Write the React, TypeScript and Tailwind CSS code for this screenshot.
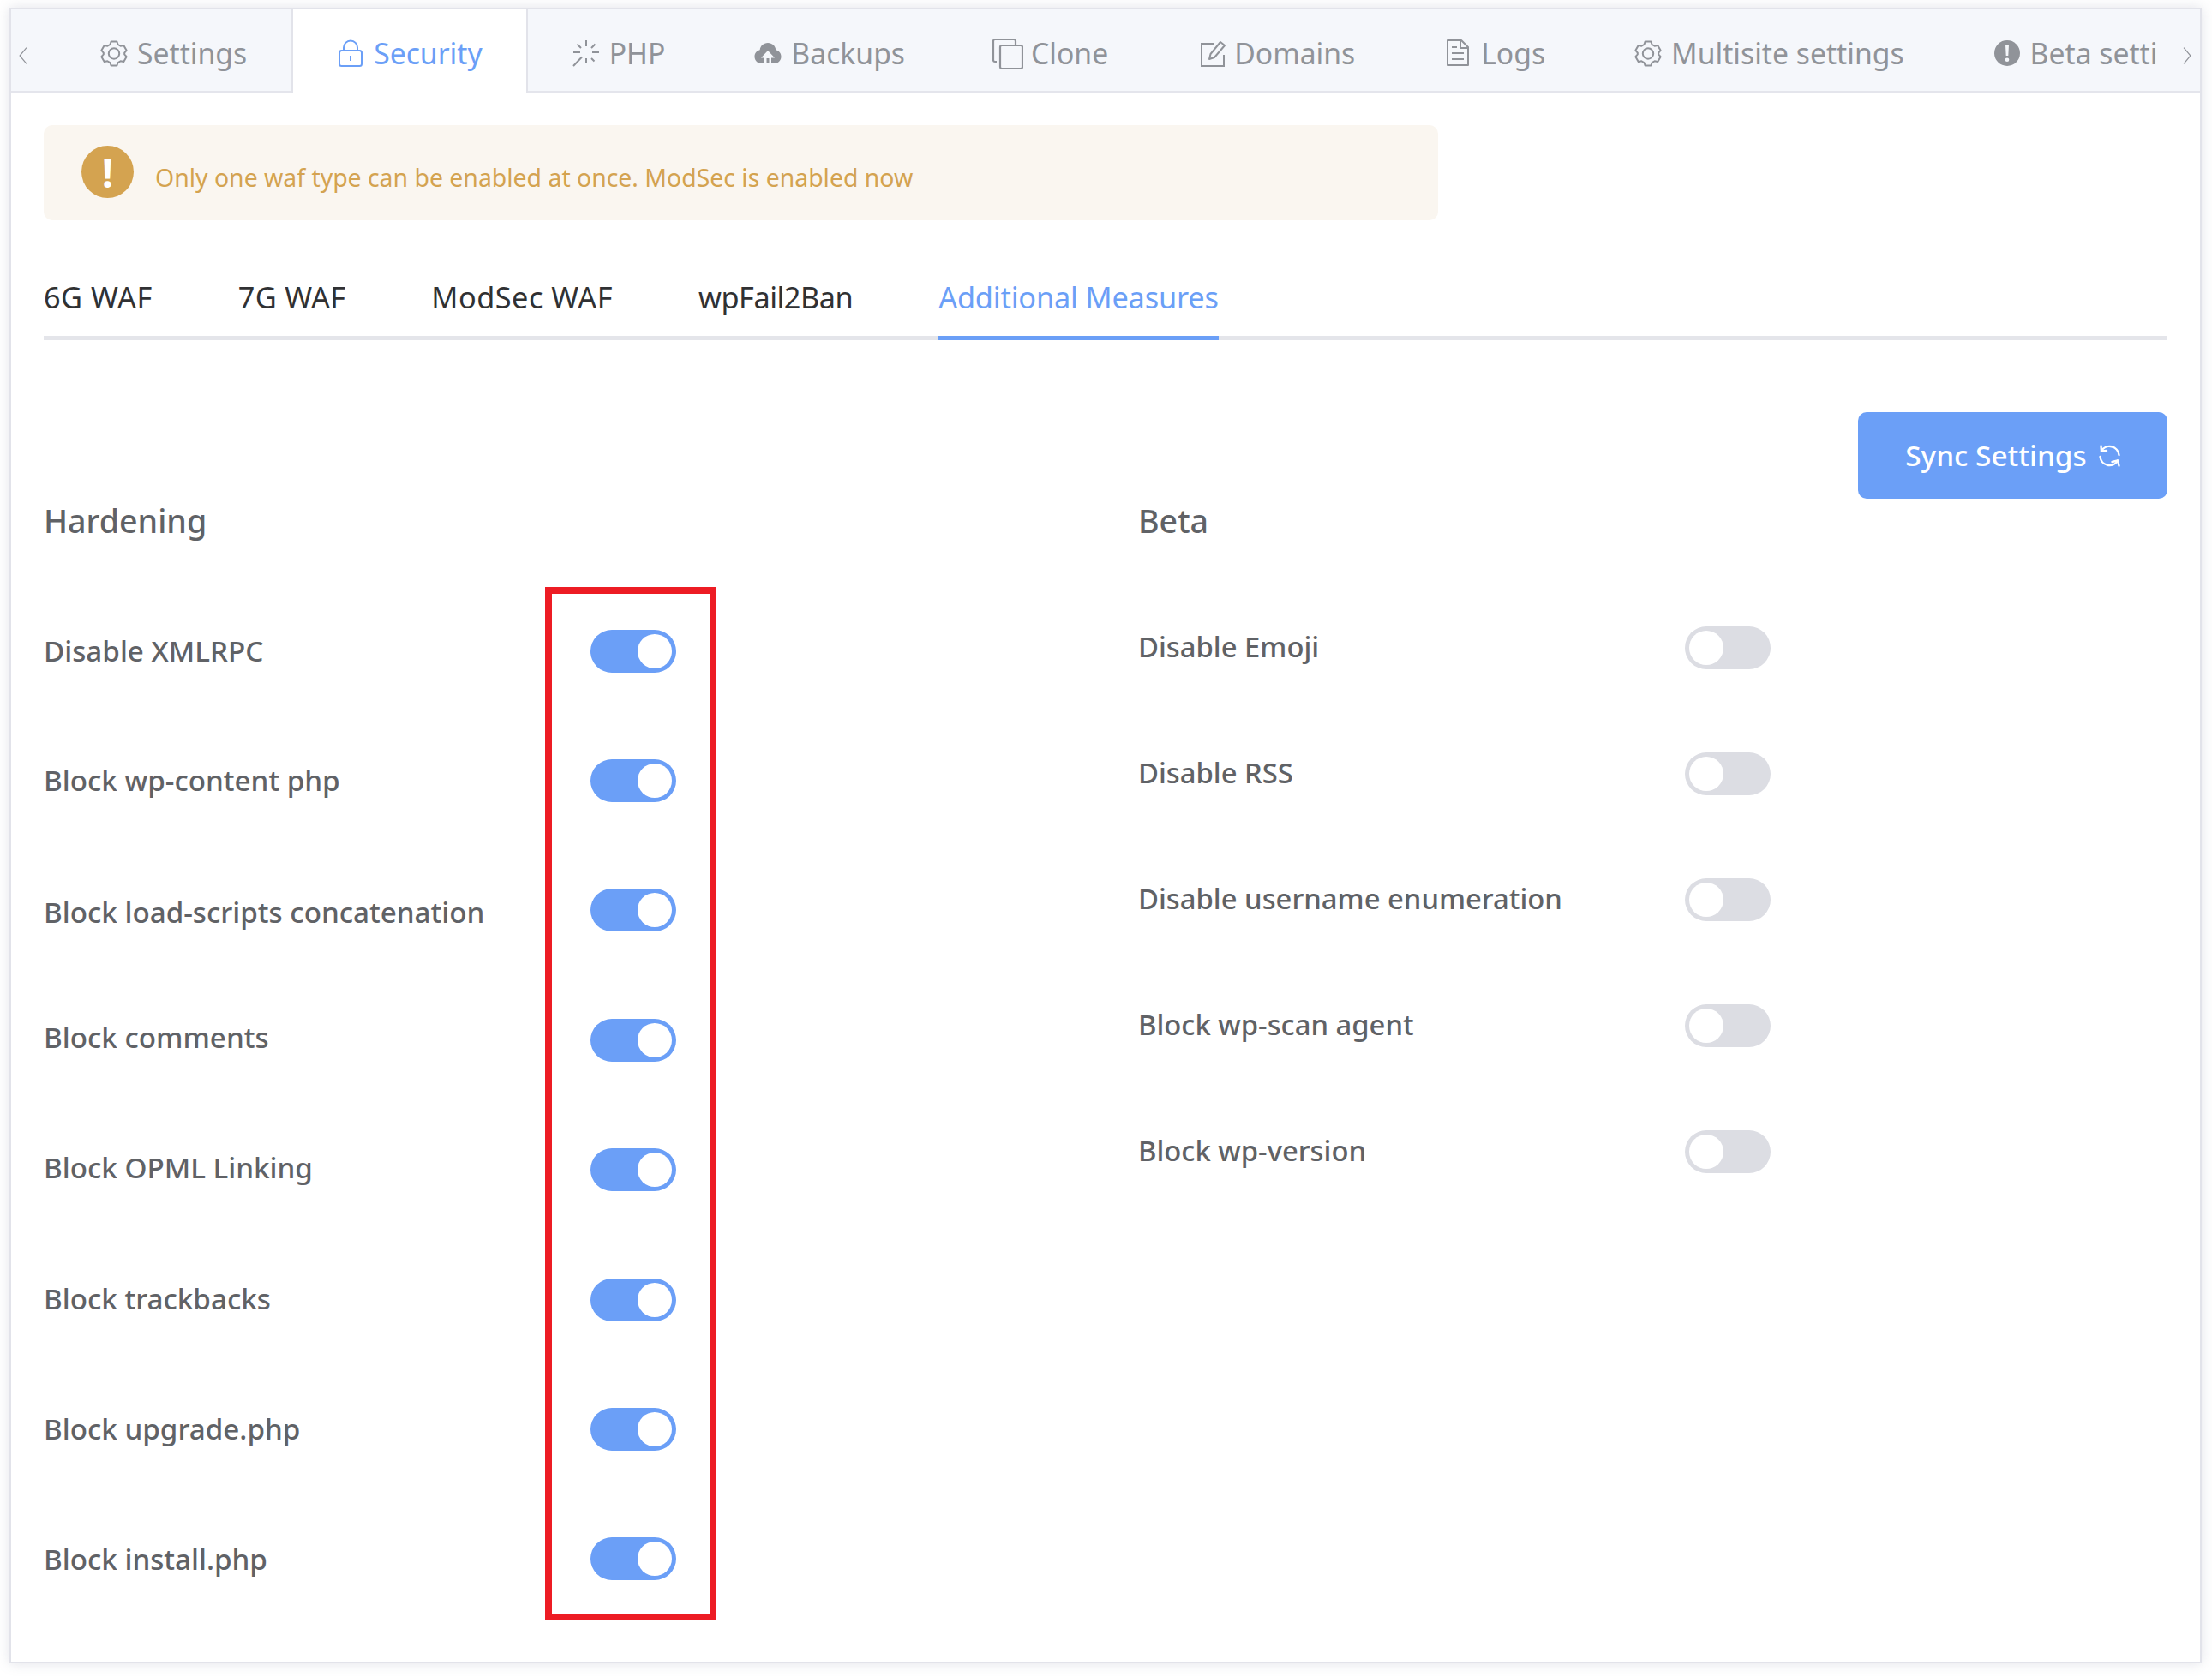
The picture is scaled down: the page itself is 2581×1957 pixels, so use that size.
import React from "react";

const Gear = ({ c = "" }: { c?: string }) => (
  <svg viewBox="0 0 32 32" className={"w-[32px] h-[32px] -mt-[2px] " + c} fill="none" stroke="currentColor" strokeWidth="2" strokeLinejoin="round">
    <path d="M12.6 2.5 19.4 2.5 20.6 6 23.6 7.7 27.3 7 30.6 12.8 28.2 15.6 28.2 17.4 30.6 20.2 27.3 26 23.6 25.3 20.6 27 19.4 30.5 12.6 30.5 11.4 27 8.4 25.3 4.7 26 1.4 20.2 3.8 17.4 3.8 15.6 1.4 12.8 4.7 7 8.4 7.7 11.4 6Z" />
    <circle cx="16" cy="16.5" r="6.2" />
  </svg>
);
const Lock = () => (
  <svg viewBox="0 0 32 32" className="w-[32px] h-[32px] -mt-[2px]" fill="none" stroke="currentColor" strokeWidth="2">
    <rect x="3" y="13" width="26" height="18" rx="2.5" />
    <path d="M8 13V9.5a8 8 0 0 1 16 0V13" />
    <path d="M16 19v6" />
  </svg>
);
const Spin = () => (
  <svg viewBox="0 0 32 32" className="w-[32px] h-[32px] -mt-[2px]" fill="none" stroke="currentColor" strokeWidth="2">
    <path d="M16 1v7M16 22v6M26.5 5.5l-4.5 4.5M22 22l3.5 3.5M31 15h-8M9 15H1M5.5 5.5 10 10M11 20.500 1 31" />
  </svg>
);
const Cloud = () => (
  <svg viewBox="0 0 32 32" className="w-[32px] h-[32px]" fill="currentColor">
    <path fillRule="evenodd" d="M16 3c5 0 8.800 3.600 9.300 8.200C29 12 31.500 15 31.500 19c0 4.700-3.500 8-7.800 8H20v-6.500h4L16 12l-8 8.500h4V27H8.300C4 27 .5 23.700.5 19c0-4 2.500-7 6.200-7.800C7.200 6.600 11 3 16 3Z" />
    <path d="M14.500 21h3v6h-3z" />
  </svg>
);
const Copy = () => (
  <svg viewBox="0 0 36 36" className="w-[36px] h-[36px] -ml-[2px] -mr-[2px] shrink-0" fill="none" stroke="currentColor" strokeWidth="2.200">
    <path d="M5 27H3a2 2 0 0 1-2-2V3a2 2 0 0 1 2-2h22a2 2 0 0 1 2 2v4" />
    <rect x="9" y="8" width="26" height="27" rx="2" />
  </svg>
);
const Edit = () => (
  <svg viewBox="0 0 32 32" className="w-[32px] h-[32px] translate-x-[2px]" fill="none" stroke="currentColor" strokeWidth="2">
    <path d="M17 4H3v26h26V17" />
    <path d="M12 22l1.500-6L25 2l5 4-12 14Z" strokeLinejoin="round" />
  </svg>
);
const Doc = () => (
  <svg viewBox="0 0 32 32" className="w-[32px] h-[32px] -mt-[1px]" fill="none" stroke="currentColor" strokeWidth="2">
    <path d="M4 1h16l8 8v21H4ZM19 1v9h9" strokeLinejoin="round" />
    <path d="M9 9h6M9 16h14M9 23h14" />
  </svg>
);
const Warn = () => (
  <svg viewBox="0 0 32 32" className="w-[32px] h-[32px] -mt-[2px]" fill="currentColor">
    <circle cx="16" cy="16" r="15" />
    <path d="M14 6h4l-.7 13h-2.600z M16 21.500a2.300 2.300 0 1 1 0 4.600 2.300 2.300 0 0 1 0-4.600z" fill="#f5f7fb" />
  </svg>
);
const Refresh = () => (
  <svg viewBox="0 0 25 26" className="w-[25px] h-[26px]" fill="none" stroke="currentColor" strokeWidth="2.400" strokeLinecap="round" strokeLinejoin="round">
    <path d="M3 7.500A11 11 0 0 1 23.500 12" />
    <path d="M1.500 14A11 11 0 0 0 22 18.500" />
    <path d="M2.500 1.500 3 7.500 9 7M15.500 20 22 18.500 23.500 24.500" />
  </svg>
);

const tabs: { label: string; icon: React.ReactNode; active?: boolean }[] = [
  { label: "Settings", icon: <Gear /> },
  { label: "Security", icon: <Lock />, active: true },
  { label: "PHP", icon: <Spin /> },
  { label: "Backups", icon: <Cloud /> },
  { label: "Clone", icon: <Copy /> },
  { label: "Domains", icon: <Edit /> },
  { label: "Logs", icon: <Doc /> },
  { label: "Multisite settings", icon: <Gear /> },
  { label: "Beta settings", icon: <Warn /> },
];

const subTabs: { label: string; track: string }[] = [
  { label: "6G WAF", track: "tracking-[0.5px]" },
  { label: "7G WAF", track: "tracking-[0.3px]" },
  { label: "ModSec WAF", track: "tracking-[0.5px]" },
  { label: "wpFail2Ban", track: "tracking-[-0.5px]" },
];

const left: { label: string; nudge: string }[] = [
  { label: "Disable XMLRPC", nudge: "" },
  { label: "Block wp-content php", nudge: "" },
  { label: "Block load-scripts concatenation", nudge: "pt-[5px]" },
  { label: "Block comments", nudge: "pb-[6px]" },
  { label: "Block OPML Linking", nudge: "pb-[4px]" },
  { label: "Block trackbacks", nudge: "pb-[2px]" },
  { label: "Block upgrade.php", nudge: "" },
  { label: "Block install.php", nudge: "" },
];
const right = [
  "Disable Emoji",
  "Disable RSS",
  "Disable username enumeration",
  "Block wp-scan agent",
  "Block wp-version",
];

const Toggle = ({ on }: { on?: boolean }) => (
  <span className={"flex w-[100px] h-[50px] rounded-full p-[5px] shrink-0 " + (on ? "justify-end bg-[#6b9ff7]" : "justify-start bg-[#dcdde3]")}>
    <span className="block w-[40px] h-[40px] rounded-full bg-white" />
  </span>
);

export default function App() {
  return (
    <div className="relative w-[2581px] h-[1957px] bg-white pt-[9px] pl-[11px] font-['Noto_Sans',sans-serif]">
      <div className="w-[2558px] h-[1932px] border-2 border-[#e2e3ea] bg-white shadow-[0_0_14px_rgba(120,125,150,0.22)] flex flex-col">
        <div className="flex h-[98px] shrink-0 bg-[#f5f7fb] border-b-[3px] border-[#e4e5ec] text-[#909399]">
          <div className="w-[52px] shrink-0 flex items-center pl-[8px] pt-[12px]">
            <svg viewBox="0 0 14 28" className="w-[12px] h-[22px]" fill="none" stroke="currentColor" strokeWidth="1.500"><path d="M12 2 2 14l10 12" /></svg>
          </div>
          <div className="flex-1 overflow-hidden flex h-[98px]">
            {tabs.map((t) => (
              <div
                key={t.label}
                className={
                  "shrink-0 h-[98px] flex items-center gap-[11px] whitespace-nowrap text-[33.700px] pt-[5px] " +
                  (t.active
                    ? "px-[51px] bg-white text-[#6b9ff7] border-x-2 border-[#e2e3ea]"
                    : "px-[52px]")
                }
              >
                {t.icon}
                <span>{t.label}</span>
              </div>
            ))}
          </div>
          <div className="w-[50px] shrink-0 flex items-center justify-end pr-[9px] pt-[12px]">
            <svg viewBox="0 0 14 28" className="w-[12px] h-[22px]" fill="none" stroke="currentColor" strokeWidth="1.500"><path d="M2 2 12 14 2 26" /></svg>
          </div>
        </div>

        <div className="flex-1 px-[38px] pt-[37px]">
          <div className="w-[1627px] h-[111px] rounded-[10px] bg-[#faf6f0] flex items-center pl-[44px] gap-[25px]">
            <span className="w-[61px] h-[61px] rounded-full bg-[#d4a350] text-white flex items-center justify-center text-[46px] font-bold leading-none shrink-0 -mt-[2px]">!</span>
            <span className="text-[#d4a350] text-[28.400px] mt-[12px]">Only one waf type can be enabled at once. ModSec is enabled now</span>
          </div>

          <div className="h-[140px] border-b-[5px] border-[#e4e5ea] flex items-end gap-[100px] text-[34.300px] text-[#303133]">
            {subTabs.map((s) => (
              <div key={s.label} className={"h-[76px] -mb-[5px] pb-[5px] " + s.track}>{s.label}</div>
            ))}
            <div className="h-[76px] -mb-[5px] border-b-[5px] border-[#6b9ff7] text-[#6b9ff7] tracking-[-0.17px]">Additional Measures</div>
          </div>

          <div className="flex justify-end mt-[84px]">
            <button className="w-[361px] h-[101px] rounded-[10px] bg-[#6b9ff7] text-white text-[33.300px] font-medium flex items-center justify-center gap-[14px]">
              Sync Settings <Refresh />
            </button>
          </div>

          <div className="flex mt-[4px]">
            <div className="w-[1277px]">
              <h2 className="text-[37.600px] leading-[44px] font-medium text-[#606266]">Hardening</h2>
              <div className="mt-[54px]">
                {left.map((l) => (
                  <div key={l.label} className="h-[151.400px] flex items-center">
                    <span className={"w-[638px] text-[33.200px] font-medium text-[#606266] " + l.nudge}>{l.label}</span>
                    <Toggle on />
                  </div>
                ))}
              </div>
            </div>
            <div className="flex-1">
              <h2 className="text-[37.600px] leading-[44px] font-medium text-[#606266]">Beta</h2>
              <div className="mt-[52px]">
                {right.map((l) => (
                  <div key={l} className="h-[147px] flex items-center">
                    <span className="w-[638px] text-[32.800px] font-medium text-[#606266] pb-[2px]">{l}</span>
                    <Toggle />
                  </div>
                ))}
              </div>
            </div>
          </div>
        </div>
      </div>
      <div className="absolute left-[636px] top-[685px] w-[200px] h-[1206px] border-[8px] border-[#ed1c24]" />
    </div>
  );
}
